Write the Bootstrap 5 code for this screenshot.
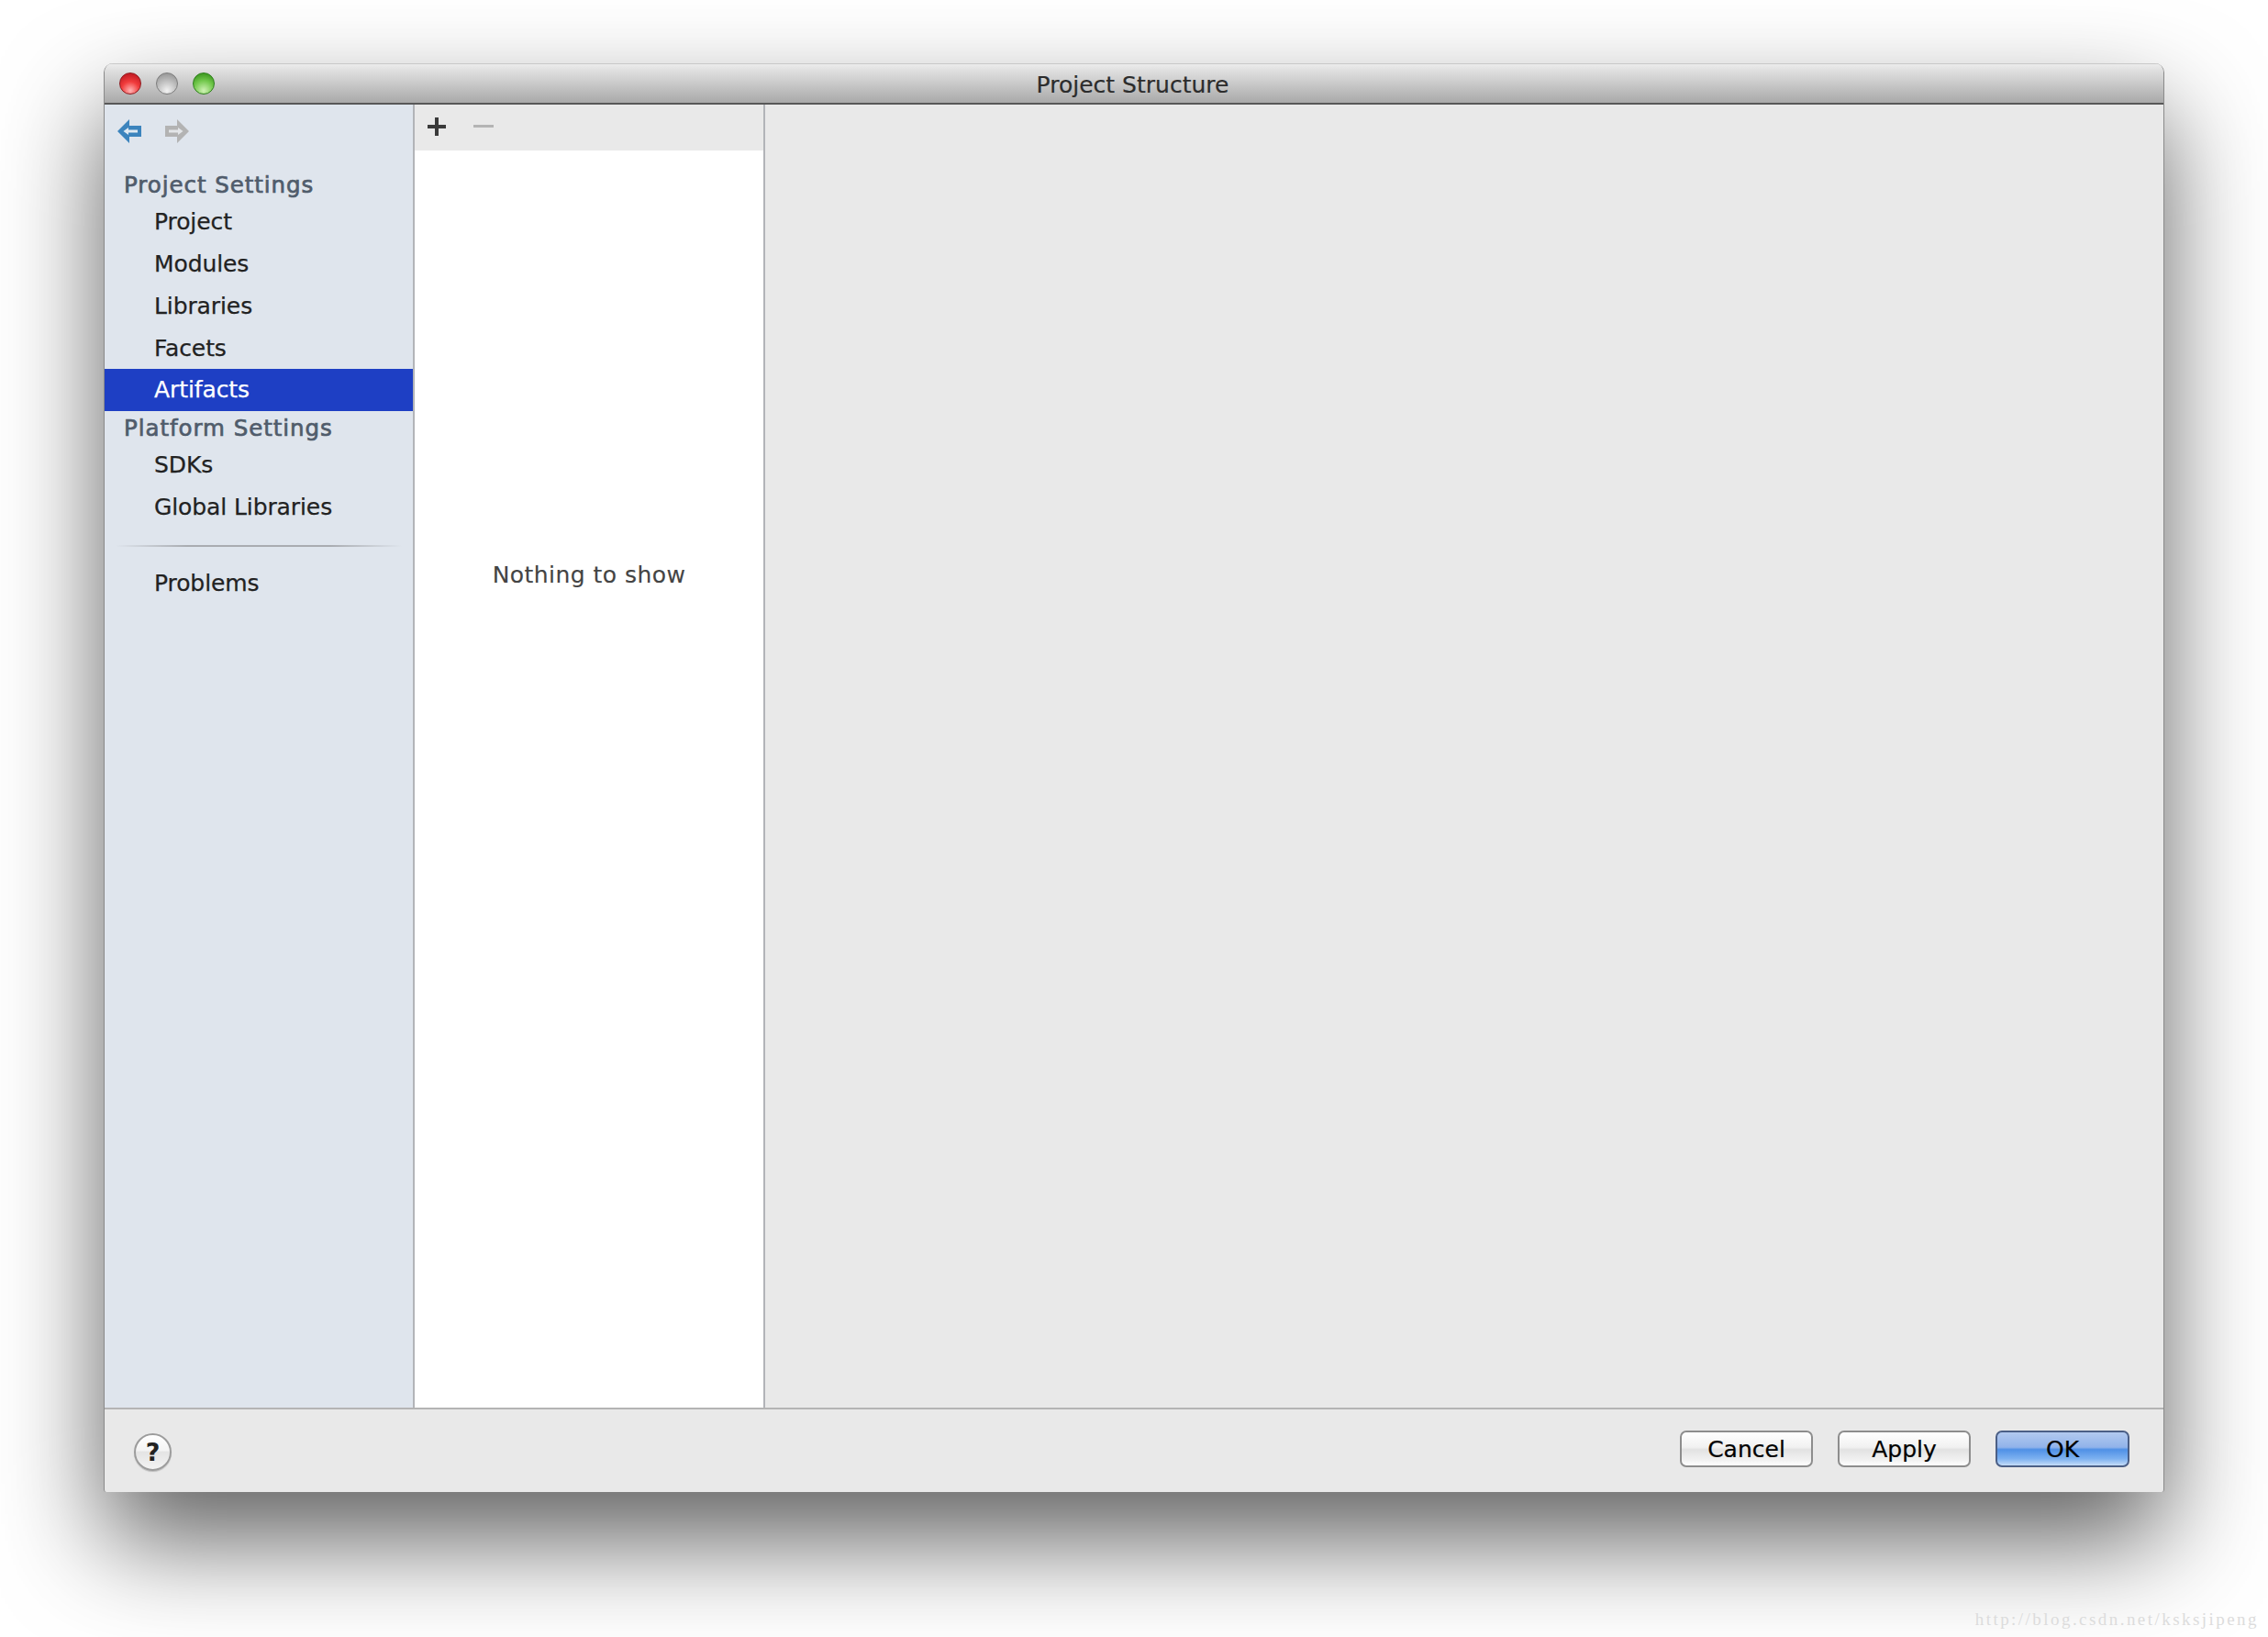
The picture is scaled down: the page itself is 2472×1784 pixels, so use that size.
<!DOCTYPE html>
<html lang="en"><head><meta charset="utf-8"><title>Project Structure</title>
<link href="https://cdn.jsdelivr.net/npm/bootstrap@5.3.0/dist/css/bootstrap.min.css" rel="stylesheet">
<style>
html,body{height:1784px;overflow:hidden;background:#fff}
body{font-family:"DejaVu Sans","Liberation Sans",sans-serif;color:#222;font-size:25px}
.desk{height:1784px;padding:69px 113px 0 113px}
.win{height:1557px;border-radius:10px 10px 3px 3px;background:#e9e9e9;border-left:1px solid #8a8a8a;border-right:1px solid #8a8a8a;
 box-shadow:0 53px 112px rgba(0,0,0,.62);overflow:hidden}
.tbar{height:45px;display:grid;grid-template-columns:1fr auto 1fr;align-items:center;
 background:linear-gradient(#ececec,#e0e0e0 15%,#a9a9a9);border-top:1px solid #c8c8c8;border-bottom:2px solid #585858;flex:none}
.lights{padding-left:16px;gap:16px}
.lamp{width:24px;height:24px;border-radius:50%;display:block}
.lamp-r{background:radial-gradient(circle at 50% 85%,#ffb5b5,#f13c3c 45%,#c81f26 80%);border:1px solid #8f1a1f}
.lamp-g{background:radial-gradient(circle at 50% 85%,#f2f2f2,#bdbdbd 50%,#999 85%);border:1px solid #7c7c7c}
.lamp-v{background:radial-gradient(circle at 50% 85%,#cff2b5,#72c84c 50%,#3f9a22 85%);border:1px solid #2e7f1c}
.wtitle{font-size:25px;line-height:1;color:#2c2c2c;margin-right:3px;padding-top:2px;-webkit-text-stroke:.2px #2c2c2c}
.mainrow{height:1422px;flex:none;border-bottom:2px solid #b4b4b4}
.side{width:338px;flex:none;background:#dfe5ed;border-right:2px solid #b2b4b8}
.arrows{height:68px;padding:16px 0 0 14px;gap:26px}
.grp{height:36px;line-height:39px;padding-left:21px;color:#505c6b;letter-spacing:.95px;font-size:24.5px;-webkit-text-stroke:.7px #505c6b}
.grp-b{height:35px;line-height:38px}
.navlist{--bs-list-group-bg:transparent;--bs-list-group-border-width:0;--bs-list-group-color:#222;border-radius:0}
.navlist .list-group-item{height:46px;line-height:47px;padding:0 0 0 54px;font-size:25px;letter-spacing:-.1px;-webkit-text-stroke:.25px currentColor}
.navlist .list-group-item.active{background:#1e3fc4;color:#fff;line-height:46px}
.sidehr{height:2px;margin:19px 12px 16px 12px;background:linear-gradient(90deg,transparent,#a9acb1 25%,#a9acb1 75%,transparent)}
.midp{width:382px;flex:none;background:#fff;border-right:2px solid #b2b4b8}
.mtool{height:50px;background:#e9e9e9;padding:0 0 2px 14px;gap:30px;flex:none}
.nothing{flex:1;color:#444;font-size:25px;letter-spacing:.45px;padding-bottom:445px;-webkit-text-stroke:.15px #444}
.rightp{background:#e9e9e9}
.foot{height:90px;flex:none;padding:23px 37px 0 32px}
.helpb{width:41px;height:41px;border-radius:50%;border:2px solid #9c9c9c;padding:0;margin-top:3px;
 background:linear-gradient(#fff,#f4f4f4 45%,#e4e4e4 50%,#f3f3f3);font-weight:700;font-size:27px;line-height:36px;color:#222;box-shadow:0 1px 1px #bbb}
.macb{width:145px;height:40px;padding:0;border-radius:7px;border:2px solid #8d8d8d;font-size:25px;line-height:35px;color:#000;-webkit-text-stroke:.2px #000;
 background:linear-gradient(#fff,#f1f1f1 45%,#e2e2e2 52%,#f2f2f2 85%,#fff)}
.macb:hover{color:#000}
.macb-ok{width:146px;border-color:#4b5f86;background:linear-gradient(#b2c9ef,#91b3ea 45%,#4f90e6 52%,#7db1f0 80%,#c4dcf8)}
.btngap{gap:27px}
.wmark{font-family:"Liberation Serif",serif;font-size:19px;line-height:1;color:#dcdcdc;letter-spacing:2.45px;text-align:right;margin:129px -103px 0 0}
</style></head>
<body>
<div class="desk">
 <div class="win d-flex flex-column">
  <div class="tbar">
   <div class="lights d-flex"><span class="lamp lamp-r"></span><span class="lamp lamp-g"></span><span class="lamp lamp-v"></span></div>
   <div class="wtitle">Project Structure</div><div></div>
  </div>
  <div class="mainrow d-flex">
   <div class="side">
    <div class="arrows d-flex align-items-start">
     <svg width="26" height="26" viewBox="0 0 26 26"><path d="M0 13 13 0v7h13v12H13v7Z" fill="#3c84bd"/><path d="M6.500 13 12 9v2.500h10v3H12V17Z" fill="#dfe9f2"/></svg>
     <svg width="26" height="26" viewBox="0 0 26 26"><path d="M26 13 13 0v7H0v12h13v7Z" fill="#b3b3b3"/><path d="M19.500 13 14 9v2.500H4v3h10V17Z" fill="#e3e5e8"/></svg>
    </div>
    <div class="grp">Project Settings</div>
    <div class="list-group list-group-flush navlist">
     <div class="list-group-item">Project</div><div class="list-group-item">Modules</div><div class="list-group-item">Libraries</div><div class="list-group-item">Facets</div><div class="list-group-item active">Artifacts</div>
    </div>
    <div class="grp grp-b">Platform Settings</div>
    <div class="list-group list-group-flush navlist">
     <div class="list-group-item">SDKs</div><div class="list-group-item">Global Libraries</div>
    </div>
    <div class="sidehr"></div>
    <div class="list-group list-group-flush navlist"><div class="list-group-item">Problems</div></div>
   </div>
   <div class="midp d-flex flex-column">
    <div class="mtool d-flex align-items-center">
     <svg width="20" height="20" viewBox="0 0 20 20"><path d="M8 0h4v8h8v4h-8v8H8v-8H0V8h8Z" fill="#3a3a3a"/></svg>
     <svg width="22" height="4" viewBox="0 0 22 4"><rect width="22" height="3" fill="#b4b4b4"/></svg>
    </div>
    <div class="nothing d-flex align-items-center justify-content-center">Nothing to show</div>
   </div>
   <div class="rightp flex-grow-1"></div>
  </div>
  <div class="foot d-flex justify-content-between align-items-start">
   <button type="button" class="btn helpb">?</button>
   <div class="d-flex btngap">
    <button type="button" class="btn macb">Cancel</button>
    <button type="button" class="btn macb">Apply</button>
    <button type="button" class="btn macb macb-ok">OK</button>
   </div>
  </div>
 </div>
 <div class="wmark">http://blog.csdn.net/ksksjipeng</div>
</div>
<script src="https://cdn.jsdelivr.net/npm/bootstrap@5.3.0/dist/js/bootstrap.bundle.min.js"></script>
</body></html>
